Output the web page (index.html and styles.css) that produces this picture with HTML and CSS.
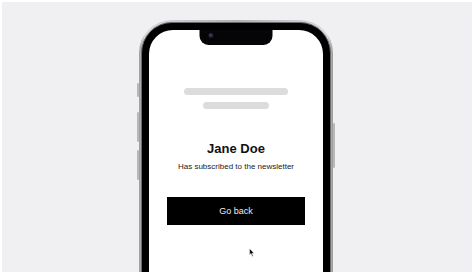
FILE: index.html
```html
<!DOCTYPE html>
<html>
<head>
<meta charset="utf-8">
<link rel="stylesheet" href="styles.css">
</head>
<body>
<div class="stage">
  <div class="phone">
    <span class="btn btn-mute"></span>
    <span class="btn btn-vol1"></span>
    <span class="btn btn-vol2"></span>
    <span class="btn btn-power"></span>
    <div class="bezel">
      <div class="screen">
        <div class="notch"><span class="camera"></span></div>
        <div class="skeleton skeleton-long"></div>
        <div class="skeleton skeleton-short"></div>
        <h1 class="name">Jane Doe</h1>
        <p class="subtitle">Has subscribed to the newsletter</p>
        <button class="back">Go back</button>
        <svg class="cursor" width="6" height="9" viewBox="0 0 6 9"><path d="M0.5 0.5 L0.5 7 L2 5.6 L3.2 8.4 L4.2 8 L3 5.3 L5.2 5.2 Z" fill="#111" stroke="#fff" stroke-width="0.5"/></svg>
      </div>
    </div>
  </div>
</div>
</body>
</html>
```
FILE: styles.css
```css
html, body {
  margin: 0;
  padding: 0;
  background: #ffffff;
}
body {
  width: 474px;
  height: 274px;
  overflow: hidden;
  font-family: "Liberation Sans", Arial, sans-serif;
}
.stage {
  margin: 2px 2px 0 2px;
  height: 270px;
  background: #f0f0f2;
  display: flex;
  justify-content: center;
  overflow: hidden;
}
.phone {
  position: relative;
  margin-top: 18px;
  width: 194px;
  height: 420px;
  flex: none;
  border-radius: 33px;
  background: linear-gradient(90deg, #9a9a9c, #d8d8da 3%, #b0b0b2 50%, #d8d8da 97%, #9a9a9c);
  padding: 2px;
  box-sizing: border-box;
  transform: translateX(-1px);
}
.btn {
  position: absolute;
  width: 2px;
  background: #b8b8ba;
  border-radius: 1px;
}
.btn-mute { left: -2px; top: 63px; height: 14px; }
.btn-vol1 { left: -2px; top: 92px; height: 30px; }
.btn-vol2 { left: -2px; top: 130px; height: 30px; }
.btn-power { right: -2px; top: 103px; height: 45px; }
.bezel {
  height: 100%;
  border-radius: 31px;
  background: #000;
  padding: 7px 7px 0 7px;
  box-sizing: border-box;
  border: 1px solid #6a6a6c;
}
.screen {
  position: relative;
  height: 100%;
  background: #fff;
  border-radius: 24px 24px 0 0;
  display: flex;
  flex-direction: column;
  align-items: center;
  padding-top: 58px;
  box-sizing: border-box;
}
.notch {
  position: absolute;
  top: 0;
  left: 50%;
  transform: translateX(-50%);
  width: 73px;
  height: 15px;
  background: #050507;
  border-radius: 0 0 9px 9px;
}
.camera {
  position: absolute;
  left: 9px;
  top: 3px;
  width: 5px;
  height: 5px;
  border-radius: 50%;
  background: radial-gradient(circle at 40% 40%, #3a4660, #141822 70%);
}
.skeleton {
  height: 7px;
  border-radius: 4px;
  background: #dcdcdc;
}
.skeleton-long { width: 104px; }
.skeleton-short { width: 66px; margin-top: 7px; }
.name {
  margin: 32px 0 0 0;
  font-size: 13px;
  line-height: 15px;
  font-weight: bold;
  color: #111;
}
.subtitle {
  margin: 6px 0 0 0;
  font-size: 8px;
  line-height: 10px;
  color: #222;
}
.back {
  margin-top: 25px;
  width: 138px;
  height: 28px;
  background: #000;
  color: #eee;
  border: 0;
  border-radius: 0;
  font-family: "Liberation Sans", Arial, sans-serif;
  font-size: 9px;
  padding: 0;
}
.cursor {
  position: absolute;
  left: 100px;
  top: 218px;
}
```
